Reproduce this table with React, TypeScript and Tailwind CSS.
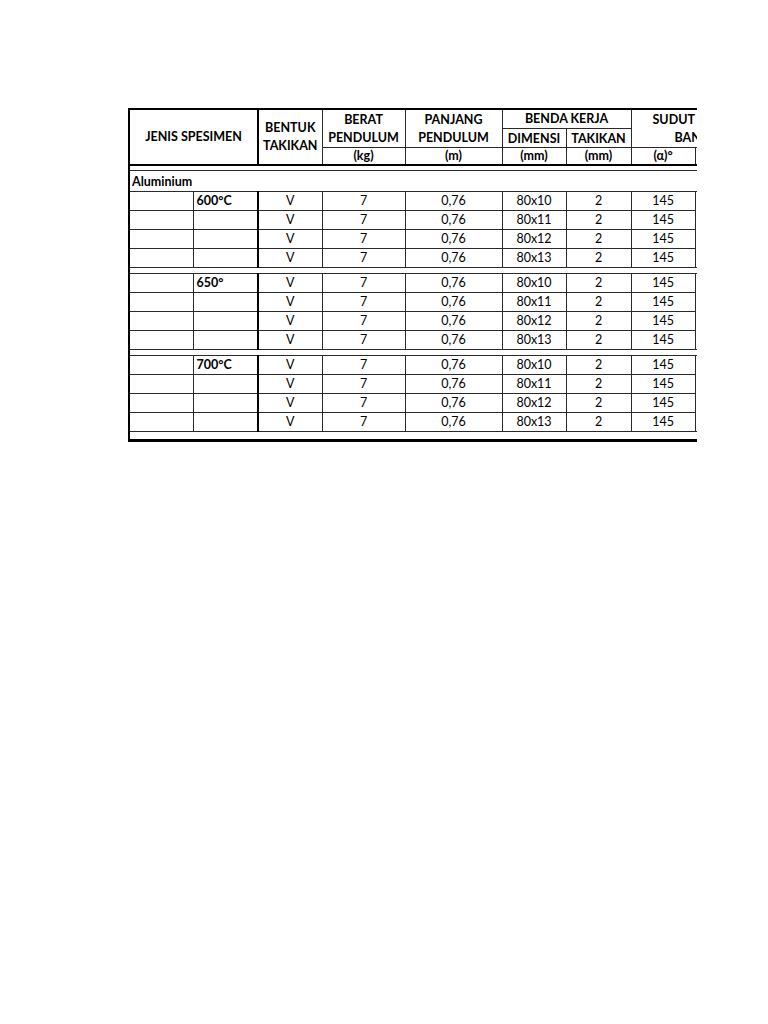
import React from 'react';

interface Group {
  label: string;
  dims: string[];
}

const groups: Group[] = [
  { label: '600°C', dims: ['80x10', '80x11', '80x12', '80x13'] },
  { label: '650°', dims: ['80x10', '80x11', '80x12', '80x13'] },
  { label: '700°C', dims: ['80x10', '80x11', '80x12', '80x13'] },
];

const cell = 'border border-[#2a2a2a] p-0 text-center align-middle';
const head = cell + ' font-bold text-[12.5px]';
const dataCell = cell + ' pb-[2px]';

const GapRow: React.FC<{ last?: boolean }> = ({ last }) => (
  <tr className={last ? 'h-[9px]' : 'h-[6px]'}>
    <td
      colSpan={9}
      className={
        'p-0 border-l-2 border-l-black border-t border-t-[#2a2a2a] ' +
        (last ? 'border-b-[3px] border-b-black' : 'border-b border-b-[#2a2a2a]')
      }
    />
  </tr>
);

const App: React.FC = () => {
  return (
    <div className="min-h-[1024px] bg-white pt-[107px] pl-[127px] font-['Lato',sans-serif] text-[12.5px] leading-[15px] text-black">
      <div className="w-[570px] overflow-hidden pt-[1px] pl-[1px]">
        <table className="table-fixed border-collapse w-[666px]">
          <colgroup>
            <col className="w-[64px]" />
            <col className="w-[65px]" />
            <col className="w-[64px]" />
            <col className="w-[83px]" />
            <col className="w-[97px]" />
            <col className="w-[64px]" />
            <col className="w-[65px]" />
            <col className="w-[64px]" />
            <col className="w-[100px]" />
          </colgroup>
          <thead>
            <tr className="h-[19px] leading-[18px]">
              <th
                rowSpan={3}
                colSpan={2}
                className={head + ' border-l-2 border-l-black border-t-2 border-t-black border-r-2 border-r-black border-b-2 border-b-black'}
              >
                JENIS SPESIMEN
              </th>
              <th rowSpan={3} className={head + ' border-t-2 border-t-black border-b-2 border-b-black'}>
                BENTUK
                <br />
                TAKIKAN
              </th>
              <th rowSpan={2} className={head + ' border-t-2 border-t-black'}>
                BERAT
                <br />
                PENDULUM
              </th>
              <th rowSpan={2} className={head + ' border-t-2 border-t-black'}>
                PANJANG
                <br />
                PENDULUM
              </th>
              <th colSpan={2} className={head + ' border-t-2 border-t-black'}>
                BENDA KERJA
              </th>
              <th
                rowSpan={2}
                colSpan={2}
                className="p-0 border-t-2 border-t-black border-l border-l-[#2a2a2a] text-left align-middle font-bold text-[12.5px] whitespace-nowrap"
              >
                <div className="pl-[21px]">SUDUT SEBELUM</div>
                <div className="pl-[43px]">BANDUL DILEPAS</div>
              </th>
            </tr>
            <tr className="h-[19px]">
              <th className={head}>DIMENSI</th>
              <th className={head}>TAKIKAN</th>
            </tr>
            <tr className="h-[17px]">
              <th className={head + ' border-b-2 border-b-black'}>(kg)</th>
              <th className={head + ' border-b-2 border-b-black'}>(m)</th>
              <th className={head + ' border-b-2 border-b-black'}>(mm)</th>
              <th className={head + ' border-b-2 border-b-black'}>(mm)</th>
              <th className={head + ' border-b-2 border-b-black'}>(α)°</th>
              <th className="p-0 border-t border-t-[#2a2a2a] border-b-2 border-b-black" />
            </tr>
          </thead>
          <tbody>
            <tr className="h-[6px]">
              <td colSpan={9} className="p-0 border-l-2 border-l-black border-b border-b-[#2a2a2a]" />
            </tr>
            <tr className="h-[21px]">
              <td
                colSpan={9}
                className="p-0 pl-[2px] border-l-2 border-l-black border-b border-b-[#2a2a2a] text-left font-bold align-middle"
              >
                Aluminium
              </td>
            </tr>
            {groups.map((g, gi) => (
              <React.Fragment key={g.label}>
                {gi > 0 && <GapRow />}
                {g.dims.map((d, i) => (
                  <tr key={d} className="h-[19px]">
                    <td className={dataCell + ' border-l-2 border-l-black'} />
                    <td className={dataCell + ' border-r-2 border-r-black text-left pl-[3px] font-bold'}>
                      {i === 0 ? g.label : ''}
                    </td>
                    <td className={dataCell}>V</td>
                    <td className={dataCell}>7</td>
                    <td className={dataCell}>0,76</td>
                    <td className={dataCell}>{d}</td>
                    <td className={dataCell}>2</td>
                    <td className={dataCell}>145</td>
                    <td className="p-0" />
                  </tr>
                ))}
              </React.Fragment>
            ))}
            <GapRow last />
          </tbody>
        </table>
      </div>
    </div>
  );
};

export default App;
